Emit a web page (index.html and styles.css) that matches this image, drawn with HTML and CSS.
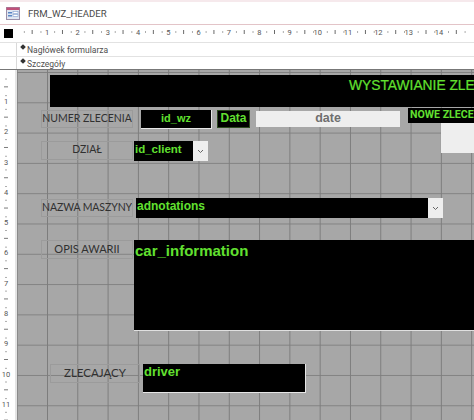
FILE: index.html
```html
<!DOCTYPE html>
<html lang="pl">
<head>
<meta charset="utf-8">
<title>FRM_WZ_HEADER</title>
<link rel="stylesheet" href="styles.css">
</head>
<body>
<div class="window">
  <header class="titlebar">
    <svg class="form-icon" width="14" height="13" viewBox="0 0 14 13">
      <rect x="0.5" y="0.5" width="13" height="12" fill="#dfe6f2" stroke="#9a8fa8"/>
      <rect x="0.5" y="0.5" width="13" height="2.5" fill="#c0517a"/>
      <rect x="2" y="5" width="4" height="1.5" fill="#5a86c4"/>
      <rect x="2" y="8" width="4" height="1.5" fill="#5a86c4"/>
      <rect x="7" y="4.5" width="5" height="2" fill="#fff" stroke="#7d9ccc" stroke-width="0.6"/>
      <rect x="7" y="7.5" width="5" height="2" fill="#fff" stroke="#7d9ccc" stroke-width="0.6"/>
    </svg>
    <span class="title">FRM_WZ_HEADER</span>
  </header>
  <div class="hruler-row">
    <div class="corner"><span class="corner-box"></span></div>
    <div class="hruler">
      <span>1</span><span>2</span><span>3</span><span>4</span><span>5</span>
      <span>6</span><span>7</span><span>8</span><span>9</span><span>10</span>
      <span>11</span><span>12</span><span>13</span><span>14</span>
    </div>
  </div>
  <div class="band-row">
    <div class="band-side"></div>
    <div class="band"><i class="marker"></i>Nagłówek formularza</div>
  </div>
  <div class="band-row band-row-last">
    <div class="band-side"></div>
    <div class="band"><i class="marker"></i>Szczegóły</div>
  </div>
  <div class="body-row">
    <div class="vruler">
      <span>1</span><span>2</span><span>3</span><span>4</span><span>5</span>
      <span>6</span><span>7</span><span>8</span><span>9</span><span>10</span><span>11</span>
    </div>
    <main class="canvas">
      <div class="ctl head-box"><span class="head-text">WYSTAWIANIE ZLE</span></div>

      <div class="ctl label l-numer">NUMER ZLECENIA</div>
      <div class="ctl field f-idwz">id_wz</div>
      <div class="ctl field f-data">Data</div>
      <div class="ctl f-date">date</div>
      <div class="ctl field f-nowe">NOWE ZLECE</div>
      <div class="ctl f-button"></div>

      <div class="ctl label l-dzial">DZIAŁ</div>
      <div class="ctl field f-client">id_client</div>
      <div class="ctl drop d-client"><svg width="7" height="5" viewBox="0 0 7 5"><path d="M1 1l2.5 2.5L6 1" fill="none" stroke="#666" stroke-width="1"/></svg></div>

      <div class="ctl label l-nazwa">NAZWA MASZYNY</div>
      <div class="ctl field f-adno">adnotations</div>
      <div class="ctl drop d-adno"><svg width="7" height="5" viewBox="0 0 7 5"><path d="M1 1l2.5 2.5L6 1" fill="none" stroke="#666" stroke-width="1"/></svg></div>

      <div class="ctl label l-opis">OPIS AWARII</div>
      <div class="ctl field f-car">car_information</div>

      <div class="ctl label l-zlec">ZLECAJĄCY</div>
      <div class="ctl field f-driver">driver</div>
    </main>
  </div>
</div>
</body>
</html>
```
FILE: styles.css
```css
* { box-sizing: border-box; }
html, body { margin: 0; padding: 0; }
body { width: 474px; height: 420px; overflow: hidden; background: #fff; font-family: Roboto, sans-serif; }
.window { width: 474px; height: 420px; display: flex; flex-direction: column; overflow: hidden; border-top: 2px solid #f6e9ec; }

.titlebar { height: 23px; flex: none; display: flex; align-items: center; padding-left: 6px; gap: 8px; background: #fff; border-bottom: 1px solid #e3c4c8; }
.form-icon { flex: none; }
.title { font-size: 9.6px; color: #4a4a4a; }

.hruler-row { height: 18px; flex: none; display: flex; background: #fff; border-bottom: 1px solid #e2e2e2; }
.corner { width: 17px; flex: none; display: flex; align-items: center; padding-left: 4px; }
.corner-box { width: 9px; height: 9px; background: #000; }
.hruler {
  flex: 1; display: flex; overflow: hidden; padding-top: 2px;
  background:
    linear-gradient(to right, transparent 15px, #666 15px, #666 16px, transparent 16px) 0 5px / 30.3px 4px repeat-x,
    linear-gradient(to right, transparent 7px, #aaa 7px, #aaa 8px, transparent 8px) 0 6px / 30.3px 2px repeat-x,
    linear-gradient(to right, transparent 23px, #aaa 23px, #aaa 24px, transparent 24px) 0 6px / 30.3px 2px repeat-x;
}
.hruler span { flex: none; width: 30.3px; text-align: right; font-size: 7.5px; line-height: 12px; color: #555; transform: translateX(2px); }

.band-row { height: 14px; flex: none; display: flex; background: #fff; border-bottom: 1px solid #e2e2e2; }
.band-row-last { height: 13px; border-bottom: 1px solid #777; }
.band-side { width: 17px; flex: none; border-right: 1px solid #d9d9d9; }
.band { flex: 1; position: relative; padding-left: 10px; font-size: 8.5px; line-height: 14px; color: #4f4f4f; white-space: nowrap; }
.marker { position: absolute; left: 4px; top: 2px; width: 4px; height: 4px; background: #333; transform: rotate(45deg); }

.body-row { flex: 1; display: flex; min-height: 0; }
.vruler {
  width: 17px; flex: none; display: flex; flex-direction: column; padding-top: 17px; border-right: 2px solid #e4e4e4;
  background:
    linear-gradient(to bottom, transparent 15px, #777 15px, #777 16px, transparent 16px) 4px 32px / 4px 30.3px repeat-y,
    linear-gradient(to bottom, transparent 7px, #aaa 7px, #aaa 8px, transparent 8px) 5px 32px / 2px 30.3px repeat-y,
    linear-gradient(to bottom, transparent 23px, #aaa 23px, #aaa 24px, transparent 24px) 5px 32px / 2px 30.3px repeat-y,
    #fff;
}
.vruler span { height: 30.3px; flex: none; width: 12px; text-align: center; font-size: 7.5px; line-height: 30px; color: #555; }

.canvas {
  flex: 1; position: relative; overflow: hidden; background-color: #a7a7a7;
  background-image:
    linear-gradient(to right, #7d7d7d 1px, transparent 1px),
    linear-gradient(to bottom, #828282 1px, transparent 1px);
  background-size: 30.3px 30.3px;
  background-position: 30px 2px;
}

.ctl { position: absolute; white-space: nowrap; overflow: hidden; }
.head-box { left: 33px; top: 5px; width: 424px; height: 32px; background: #000; }
.head-text { position: absolute; left: 299px; top: 2px; font: 13.8px/18px "Liberation Sans", sans-serif; color: #62e030; -webkit-text-stroke: 0.2px #62e030; }

.label { border: 1px solid #9b9b9b; font: 10.5px/15px Lato, sans-serif; color: #303030; text-align: center; }
.l-numer { left: 24px; top: 40px; width: 92px; height: 18px; }
.l-dzial { left: 24px; top: 71px; width: 92px; height: 19px; }
.l-nazwa { left: 24px; top: 129px; width: 92px; height: 18px; letter-spacing: -0.1px; }
.l-opis { left: 24px; top: 170px; width: 92px; height: 19px; font-size: 11px; }
.l-zlec { left: 33px; top: 294px; width: 90px; height: 19px; font-size: 11.5px; }

.field { background: #000; color: #62e030; font-family: "Liberation Sans", sans-serif; font-weight: 700; }
.f-idwz { left: 124px; top: 40px; width: 71px; height: 19px; border-right: 1px solid #e6e6e6; border-bottom: 1px solid #e6e6e6; text-align: center; font-size: 11px; line-height: 16px; }
.f-data { left: 200px; top: 40px; width: 33px; height: 18px; border: 1px solid #2d4a20; text-align: center; font-size: 12px; line-height: 15px; }
.f-date { left: 239px; top: 41px; width: 144px; height: 16px; background: #eeeeee; color: #6f6f6f; text-align: center; font: 700 12.5px/15px "Liberation Sans", sans-serif; }
.f-nowe { left: 391px; top: 38px; width: 66px; height: 15px; padding-left: 2px; font-family: Roboto, sans-serif; font-size: 10.6px; line-height: 14px; }
.f-button { left: 424px; top: 53px; width: 33px; height: 30px; background: #eeeeee; }
.f-client { left: 117px; top: 71px; width: 59px; height: 20px; padding-left: 1px; font-size: 11.5px; line-height: 16px; }
.drop { background: #eeeeee; display: flex; align-items: center; justify-content: center; }
.d-client { left: 176px; top: 71px; width: 15px; height: 20px; }
.f-adno { left: 119px; top: 128px; width: 292px; height: 20px; padding-left: 1px; font-size: 12px; line-height: 16px; }
.d-adno { left: 411px; top: 128px; width: 15px; height: 20px; }
.f-car { left: 117px; top: 170px; width: 340px; height: 91px; border-bottom: 1px solid #e0e0e0; padding-left: 1px; font-size: 15px; line-height: 21px; }
.f-driver { left: 126px; top: 294px; width: 163px; height: 29px; border-right: 1px solid #e6e6e6; border-bottom: 1px solid #e6e6e6; padding-left: 1px; font-size: 13px; line-height: 15px; }
```
